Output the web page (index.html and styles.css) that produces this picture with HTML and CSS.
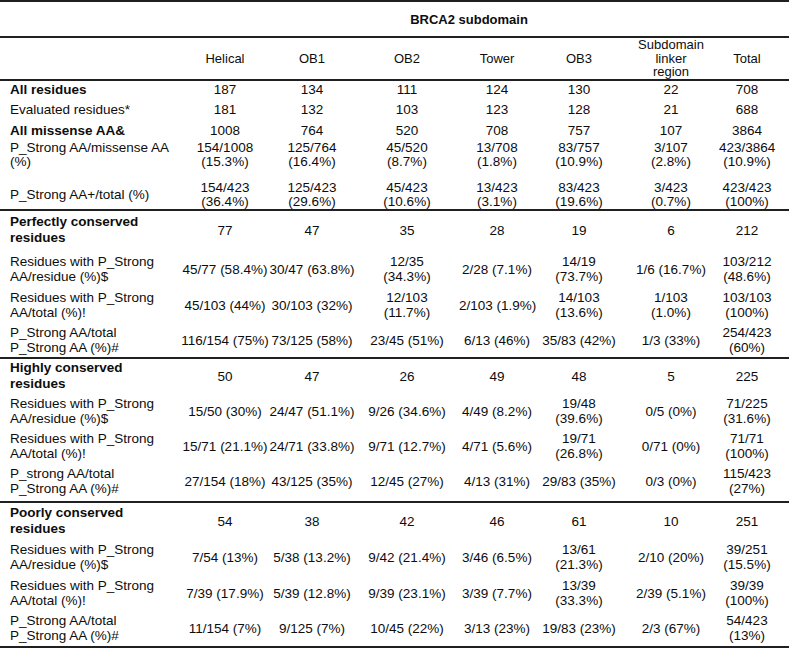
FILE: index.html
```html
<!DOCTYPE html>
<html lang="en">
<head>
<meta charset="utf-8">
<title>BRCA2 subdomain</title>
<link rel="stylesheet" href="styles.css">
</head>
<body>
<table class="data">
  <colgroup>
    <col class="c-label">
    <col class="c-helical">
    <col class="c-ob1">
    <col class="c-ob2">
    <col class="c-tower">
    <col class="c-ob3">
    <col class="c-linker">
    <col class="c-total">
  </colgroup>
  <tbody>
    <tr class="title-row">
      <td></td>
      <td colspan="7" class="title">BRCA2 subdomain</td>
    </tr>
    <tr class="head-row">
      <td></td>
      <td>Helical</td>
      <td>OB1</td>
      <td>OB2</td>
      <td>Tower</td>
      <td>OB3</td>
      <td>Subdomain<br>linker<br>region</td>
      <td>Total</td>
    </tr>

    <tr class="r-all">
      <td class="label strong">All residues</td>
      <td>187</td><td>134</td><td>111</td><td>124</td><td>130</td><td>22</td><td>708</td>
    </tr>
    <tr class="r-eval">
      <td class="label">Evaluated residues*</td>
      <td>181</td><td>132</td><td>103</td><td>123</td><td>128</td><td>21</td><td>688</td>
    </tr>
    <tr class="r-miss">
      <td class="label strong">All missense AA&amp;</td>
      <td>1008</td><td>764</td><td>520</td><td>708</td><td>757</td><td>107</td><td>3864</td>
    </tr>
    <tr class="r-pmiss">
      <td class="label">P_Strong AA/missense AA<br>(%)</td>
      <td>154/1008<br>(15.3%)</td>
      <td>125/764<br>(16.4%)</td>
      <td>45/520<br>(8.7%)</td>
      <td>13/708<br>(1.8%)</td>
      <td>83/757<br>(10.9%)</td>
      <td>3/107<br>(2.8%)</td>
      <td>423/3864<br>(10.9%)</td>
    </tr>
    <tr class="r-ptotal">
      <td class="label">P_Strong AA+/total (%)</td>
      <td>154/423<br>(36.4%)</td>
      <td>125/423<br>(29.6%)</td>
      <td>45/423<br>(10.6%)</td>
      <td>13/423<br>(3.1%)</td>
      <td>83/423<br>(19.6%)</td>
      <td>3/423<br>(0.7%)</td>
      <td>423/423<br>(100%)</td>
    </tr>

    <tr class="group r-perfect">
      <td class="label strong">Perfectly conserved<br>residues</td>
      <td>77</td><td>47</td><td>35</td><td>28</td><td>19</td><td>6</td><td>212</td>
    </tr>
    <tr class="sub r-p1">
      <td class="label">Residues with P_Strong<br>AA/residue (%)$</td>
      <td>45/77 (58.4%)</td>
      <td>30/47 (63.8%)</td>
      <td>12/35<br>(34.3%)</td>
      <td>2/28 (7.1%)</td>
      <td>14/19<br>(73.7%)</td>
      <td>1/6 (16.7%)</td>
      <td>103/212<br>(48.6%)</td>
    </tr>
    <tr class="sub r-p2">
      <td class="label">Residues with P_Strong<br>AA/total (%)!</td>
      <td>45/103 (44%)</td>
      <td>30/103 (32%)</td>
      <td>12/103<br>(11.7%)</td>
      <td>2/103 (1.9%)</td>
      <td>14/103<br>(13.6%)</td>
      <td>1/103<br>(1.0%)</td>
      <td>103/103<br>(100%)</td>
    </tr>
    <tr class="sub r-p3">
      <td class="label">P_Strong AA/total<br>P_Strong AA (%)#</td>
      <td>116/154 (75%)</td>
      <td>73/125 (58%)</td>
      <td>23/45 (51%)</td>
      <td>6/13 (46%)</td>
      <td>35/83 (42%)</td>
      <td>1/3 (33%)</td>
      <td>254/423<br>(60%)</td>
    </tr>

    <tr class="group r-high">
      <td class="label strong">Highly conserved<br>residues</td>
      <td>50</td><td>47</td><td>26</td><td>49</td><td>48</td><td>5</td><td>225</td>
    </tr>
    <tr class="sub r-h1">
      <td class="label">Residues with P_Strong<br>AA/residue (%)$</td>
      <td>15/50 (30%)</td>
      <td>24/47 (51.1%)</td>
      <td>9/26 (34.6%)</td>
      <td>4/49 (8.2%)</td>
      <td>19/48<br>(39.6%)</td>
      <td>0/5 (0%)</td>
      <td>71/225<br>(31.6%)</td>
    </tr>
    <tr class="sub r-h2">
      <td class="label">Residues with P_Strong<br>AA/total (%)!</td>
      <td>15/71 (21.1%)</td>
      <td>24/71 (33.8%)</td>
      <td>9/71 (12.7%)</td>
      <td>4/71 (5.6%)</td>
      <td>19/71<br>(26.8%)</td>
      <td>0/71 (0%)</td>
      <td>71/71<br>(100%)</td>
    </tr>
    <tr class="sub r-h3">
      <td class="label">P_strong AA/total<br>P_Strong AA (%)#</td>
      <td>27/154 (18%)</td>
      <td>43/125 (35%)</td>
      <td>12/45 (27%)</td>
      <td>4/13 (31%)</td>
      <td>29/83 (35%)</td>
      <td>0/3 (0%)</td>
      <td>115/423<br>(27%)</td>
    </tr>

    <tr class="group r-poor">
      <td class="label strong">Poorly conserved<br>residues</td>
      <td>54</td><td>38</td><td>42</td><td>46</td><td>61</td><td>10</td><td>251</td>
    </tr>
    <tr class="sub r-o1">
      <td class="label">Residues with P_Strong<br>AA/residue (%)$</td>
      <td>7/54 (13%)</td>
      <td>5/38 (13.2%)</td>
      <td>9/42 (21.4%)</td>
      <td>3/46 (6.5%)</td>
      <td>13/61<br>(21.3%)</td>
      <td>2/10 (20%)</td>
      <td>39/251<br>(15.5%)</td>
    </tr>
    <tr class="sub r-o2">
      <td class="label">Residues with P_Strong<br>AA/total (%)!</td>
      <td>7/39 (17.9%)</td>
      <td>5/39 (12.8%)</td>
      <td>9/39 (23.1%)</td>
      <td>3/39 (7.7%)</td>
      <td>13/39<br>(33.3%)</td>
      <td>2/39 (5.1%)</td>
      <td>39/39<br>(100%)</td>
    </tr>
    <tr class="sub r-o3">
      <td class="label">P_Strong AA/total<br>P_Strong AA (%)#</td>
      <td>11/154 (7%)</td>
      <td>9/125 (7%)</td>
      <td>10/45 (22%)</td>
      <td>3/13 (23%)</td>
      <td>19/83 (23%)</td>
      <td>2/3 (67%)</td>
      <td>54/423<br>(13%)</td>
    </tr>
  </tbody>
</table>
</body>
</html>
```

FILE: styles.css
```css
html, body {
  margin: 0;
  padding: 0;
  background: #ffffff;
}

.data {
  width: 789px;
  table-layout: fixed;
  border-collapse: separate;
  border-spacing: 0;
  border-top: 2px solid #202020;
  border-bottom: 2px solid #202020;
  font-family: "Liberation Sans", Arial, sans-serif;
  font-size: 13.5px;
  color: #0d0d0d;
}

.c-label { width: 181px; }
.c-helical { width: 88px; }
.c-ob1 { width: 86px; }
.c-ob2 { width: 104px; }
.c-tower { width: 76px; }
.c-ob3 { width: 88px; }
.c-linker { width: 96px; }
.c-total { width: 70px; }

/* base cell */
.data td {
  padding-top: 0;
  padding-bottom: 0;
  padding-left: 0;
  padding-right: 0;
  text-align: center;
  vertical-align: middle;
  white-space: nowrap;
  line-height: 15px;
}

.data td:last-child {
  padding-right: 14px;
}

.data td.label {
  text-align: left;
  padding-left: 10px;
}

.data td.strong {
  font-weight: bold;
}

/* title + column heads */
.title-row td {
  padding-top: 10px;
  padding-bottom: 9px;
  border-bottom: 2px solid #202020;
}
.data td.title {
  font-weight: bold;
  font-size: 13px;
  padding-right: 32px;
}

.head-row td {
  font-size: 13px;
  line-height: 13.5px;
  border-bottom: 2px solid #202020;
}

/* top block */
.r-all td,
.r-eval td,
.r-miss td,
.r-pmiss td,
.r-ptotal td {
  line-height: 14px;
}
.r-all td { padding-top: 2.5px; padding-bottom: 3px; }
.r-eval td { padding-top: 3px; padding-bottom: 4px; }
.r-miss td { padding-top: 3px; padding-bottom: 3px; }
.r-pmiss td { padding-top: 0; padding-bottom: 6px; }
.r-ptotal td { padding-top: 6px; padding-bottom: 0; }

/* conservation groups */
.group td {
  border-top: 2px solid #202020;
}
.group td.label {
  line-height: 16px;
}

.r-perfect td { padding-top: 3px; padding-bottom: 4px; }
.r-p1 td { padding-top: 4px; padding-bottom: 3px; }
.r-p2 td { padding-top: 3px; padding-bottom: 2px; }
.r-p3 td { padding-top: 3px; padding-bottom: 2px; }

.r-high td { padding-top: 1px; padding-bottom: 2px; }
.r-h1 td { padding-top: 2px; padding-bottom: 2px; }
.r-h2 td { padding-top: 3px; padding-bottom: 2px; }
.r-h3 td { padding-top: 3px; padding-bottom: 5px; }

.r-poor td { padding-top: 2px; padding-bottom: 2px; }
.r-o1 td { padding-top: 3px; padding-bottom: 3px; }
.r-o2 td { padding-top: 3px; padding-bottom: 2px; }
.r-o3 td { padding-top: 3px; padding-bottom: 3px; }
```
